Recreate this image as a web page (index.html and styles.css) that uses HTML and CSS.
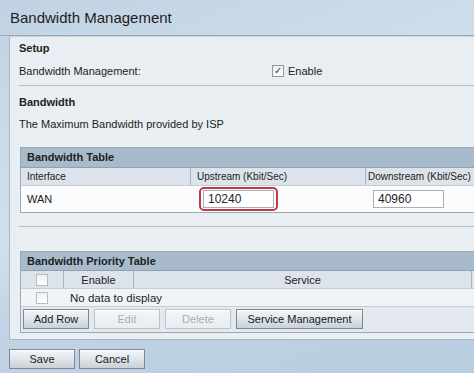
FILE: index.html
```html
<!DOCTYPE html>
<html lang="en">
<head>
    <meta charset="UTF-8">
    <title>Bandwidth Management</title>
    <link rel="stylesheet" href="styles.css">
</head>
<body>
<div class="page-title">Bandwidth Management</div>

<div class="panel">
    <div class="section-title">Setup</div>
    <div class="field-row">
        <span class="field-label">Bandwidth Management:</span>
        <label class="check-label"><span class="checkbox checked">&#10003;</span>Enable</label>
    </div>
    <div class="divider"></div>

    <div class="section-title second">Bandwidth</div>
    <div class="field-row">The Maximum Bandwidth provided by ISP</div>

    <!-- Bandwidth Table -->
    <div class="grid-table bw-table">
        <div class="table-caption">Bandwidth Table</div>
        <div class="bw-row bw-head">
            <div class="cell">Interface</div>
            <div class="cell">Upstream (Kbit/Sec)</div>
            <div class="cell">Downstream (Kbit/Sec)</div>
        </div>
        <div class="bw-row bw-data">
            <div class="cell">WAN</div>
            <div class="cell"><span class="highlight"><span class="text-input">10240</span></span></div>
            <div class="cell"><span class="text-input">40960</span></div>
        </div>
    </div>

    <div class="divider wide"></div>

    <!-- Bandwidth Priority Table -->
    <div class="grid-table prio-table">
        <div class="table-caption">Bandwidth Priority Table</div>
        <div class="prio-row prio-head">
            <div class="cell center"><span class="checkbox"></span></div>
            <div class="cell center">Enable</div>
            <div class="cell center service-col">Service</div>
        </div>
        <div class="prio-row prio-empty">
            <div class="cell center"><span class="checkbox"></span></div>
            <div class="cell span-2">No data to display</div>
        </div>
        <div class="button-row">
            <button class="btn">Add Row</button>
            <button class="btn" disabled>Edit</button>
            <button class="btn" disabled>Delete</button>
            <button class="btn wide-btn">Service Management</button>
        </div>
    </div>
</div>

<div class="footer-buttons">
    <button class="btn">Save</button>
    <button class="btn">Cancel</button>
</div>
</body>
</html>
```

FILE: styles.css
```css
:root {
    --panel-bg: #e8eef2;
    --panel-border: #a9b7c4;
    --caption-bg: #a8bbcc;
    --head-bg: #dce3ea;
    --line: #b3bfca;
    --text: #222;
}

body {
    margin: 0;
    width: 474px;
    height: 373px;
    overflow: hidden;
    font-family: 'Liberation Sans', Arial, sans-serif;
    font-size: 11px;
    color: var(--text);
    background: linear-gradient(160deg, #c0d2e3 0%, #d2e0ec 45%, #c1d3e4 60%, #b9cde0 100%);
}

/* Title bar */
.page-title {
    height: 36px;
    line-height: 36px;
    padding-left: 10px;
    font-size: 15px;
    color: #1d1d1d;
    border-bottom: 1px solid #9aaab9;
    box-sizing: border-box;
}

/* Main panel */
.panel {
    margin-left: 9px;
    width: 480px;
    height: 304px;
    box-sizing: border-box;
    padding: 0 0 0 9px;
    background: var(--panel-bg);
    border-left: 1px solid var(--panel-border);
    border-top: 1px solid #c9d3dc;
    border-bottom: 1px solid var(--panel-border);
}

.section-title {
    font-weight: bold;
    height: 22px;
    line-height: 22px;
}

.section-title.second {
    height: 20px;
    line-height: 20px;
}

.field-row {
    display: flex;
    align-items: center;
    height: 23px;
    white-space: nowrap;
}

.field-label {
    width: 253px;
}

.check-label {
    display: flex;
    align-items: center;
    gap: 4px;
}

.checkbox {
    display: inline-block;
    width: 10px;
    height: 10px;
    border: 1px solid #b4bcc4;
    background: linear-gradient(#f0f0f0, #fff);
    font-size: 10px;
    line-height: 10px;
    text-align: center;
    color: #2a3a5a;
}

.checkbox.checked {
    border-color: #8e98a4;
}

.divider {
    height: 1px;
    background: var(--line);
    margin: 3px 0 6px 0;
}

.divider.wide {
    margin: 13px 0 24px 0;
}

/* Tables */
.grid-table {
    width: 470px;
    margin-left: 1px;
    border: 1px solid #99a9b8;
    border-right: none;
    box-sizing: border-box;
    white-space: nowrap;
}

.bw-table {
    margin-top: 12px;
}

.table-caption {
    height: 19px;
    line-height: 19px;
    padding-left: 6px;
    font-weight: bold;
    background: var(--caption-bg);
    border-bottom: 1px solid #8ea2b4;
}

.prio-table .table-caption {
    height: 18px;
    line-height: 18px;
}

.cell {
    padding-left: 6px;
    display: flex;
    align-items: center;
}

.center {
    justify-content: center;
    padding-left: 0;
}

.bw-row {
    display: grid;
    grid-template-columns: 169px 175px 1fr;
}

.bw-head {
    height: 17px;
    background: var(--head-bg);
    border-bottom: 1px solid #c4ccd4;
    font-size: 10px;
}

.bw-head .cell + .cell {
    border-left: 1px solid #aab5c0;
}

.bw-head .cell:last-child {
    padding-left: 2px;
}

.bw-data {
    height: 26px;
    background: #fbfcfd;
}

.bw-data .cell:nth-child(2) {
    padding-left: 9px;
}

.bw-data .cell:nth-child(3) {
    padding-left: 8px;
}

.highlight {
    display: inline-block;
    padding: 1px 2px;
    border: 2px solid #c13a44;
    border-radius: 5px;
}

.text-input {
    display: inline-block;
    width: 65px;
    height: 16px;
    line-height: 16px;
    padding-left: 4px;
    border: 1px solid #a7b0b8;
    background: #fff;
    font-size: 12px;
}

.prio-row {
    display: grid;
    grid-template-columns: 42px 70px 339px 1fr;
}

.prio-head {
    height: 17px;
    background: var(--head-bg);
    border-bottom: 1px solid #c4ccd4;
}

.prio-head .cell + .cell {
    border-left: 1px solid #aab5c0;
}

.prio-head .service-col {
    border-right: 1px solid #aab5c0;
}

.prio-empty {
    height: 17px;
    background: #f1f4f7;
    border-bottom: 1px solid #c4ccd4;
}

.span-2 {
    grid-column: span 3;
    padding-left: 7px;
    font-size: 11.5px;
}

.button-row {
    display: flex;
    gap: 5px;
    padding: 2px 3px 3px 2px;
    background: #e3e9ee;
}

/* Buttons */
.btn {
    width: 66px;
    height: 20px;
    padding: 0;
    font-family: 'Liberation Sans', Arial, sans-serif;
    font-size: 11px;
    color: #1a1a1a;
    border: 1px solid #7d8a96;
    background: linear-gradient(#f4f6f8 0%, #e2e7eb 45%, #c9d1d8 100%);
    box-shadow: inset 0 1px 0 #fff;
}

.btn:disabled {
    color: #a8adb2;
    border-color: #bcc4cb;
    background: linear-gradient(#f3f5f7, #e9edf0);
}

.wide-btn {
    width: 127px;
}

.footer-buttons {
    display: flex;
    gap: 4px;
    padding: 9px 0 0 9px;
}
```
